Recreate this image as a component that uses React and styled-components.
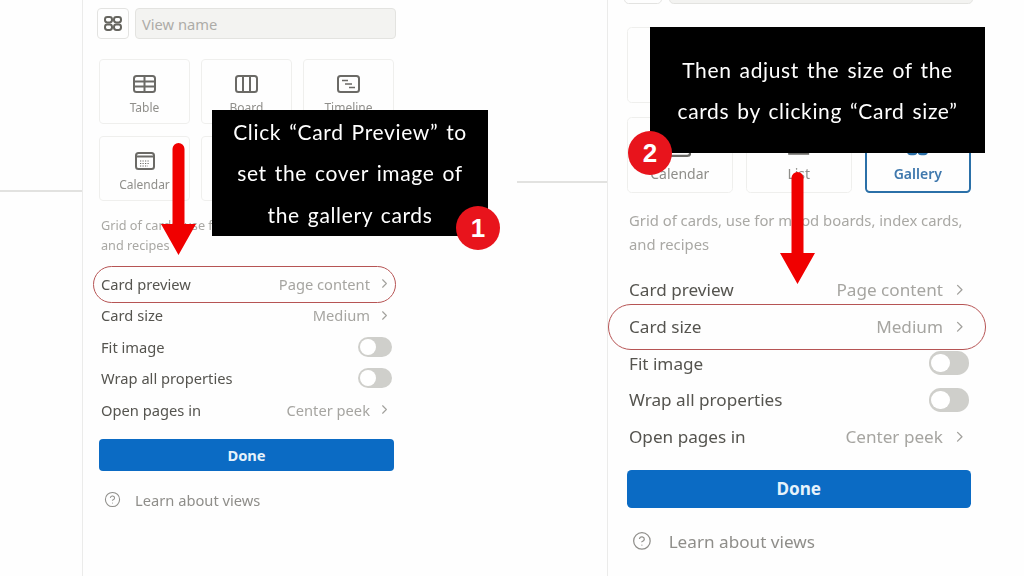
import * as React from "react";
import styled, { createGlobalStyle } from "styled-components";
import { ChevronRight, CircleHelp } from "lucide-react";

const Global = createGlobalStyle`
  html, body {
    margin: 0;
    background: #fefefe;
    overflow: hidden;
  }
`;

const Page = styled.div`
  position: relative;
  display: flex;
  width: 1024px;
  height: 576px;
  overflow: hidden;
  background: #fefefe;
  font-family: "Noto Sans", "Open Sans", sans-serif;
`;

const Gutter = styled.div`
  flex: none;
  width: ${(p) => p.$width}px;
  height: ${(p) => p.$line}px;
  border-bottom: 2px solid #e2e2e0;
`;

const Panel = styled.div`
  flex: none;
  box-sizing: border-box;
  width: ${(p) => p.$width}px;
  height: 700px;
  margin-top: ${(p) => p.$top}px;
  padding: 8px 0 0 14px;
  border-left: 1px solid #ebebea;
  zoom: ${(p) => p.$zoom};
  filter: blur(0.4px);
`;

const Content = styled.div`
  width: 299px;
`;

const NameRow = styled.div`
  display: flex;
  gap: 6px;
`;

const IconButton = styled.div`
  flex: none;
  display: flex;
  align-items: center;
  justify-content: center;
  width: 32px;
  height: 31px;
  box-sizing: border-box;
  border: 1px solid #e3e3e1;
  border-radius: 4px;
  color: #66655f;
`;

const NameInput = styled.div`
  flex: 1;
  display: flex;
  align-items: center;
  box-sizing: border-box;
  height: 31px;
  padding-left: 6px;
  background: #f3f3f1;
  border: 1px solid #e3e3e0;
  border-radius: 4px;
  color: #adaca8;
  font-size: 14.7px;
`;

const TileGrid = styled.div`
  display: grid;
  grid-template-columns: repeat(3, 91px);
  grid-auto-rows: 65px;
  gap: 12px 11px;
  margin: 20px 2px 0;
`;

const Tile = styled.div`
  display: flex;
  flex-direction: column;
  align-items: center;
  gap: 7px;
  box-sizing: border-box;
  padding-top: ${(p) => (p.$active ? 14 : 15)}px;
  border: ${(p) => (p.$active ? "2px solid #2b70a8" : "1px solid #efefed")};
  border-radius: 4px;
  color: ${(p) => (p.$active ? "#3f78ad" : "#8f8e8a")};
  font-size: 12px;
  line-height: 16px;
  font-weight: ${(p) => (p.$active ? 600 : 400)};

  svg {
    flex: none;
    height: 18px;
    color: ${(p) => (p.$active ? "#2b70a8" : "#6b6a66")};
  }
`;

const Description = styled.p`
  margin: 14px 2px 13px 4px;
  color: #a9a8a4;
  font-size: 12.7px;
  line-height: 20px;
`;

const Row = styled.div`
  display: flex;
  align-items: center;
  justify-content: space-between;
  height: 31.5px;
  margin: 0 4px;
  color: #55544f;
  font-size: 14.7px;
`;

const RowValue = styled.span`
  display: flex;
  align-items: center;
  gap: 7px;
  color: #a6a5a1;

  svg {
    color: #a2a19d;
  }
`;

const Toggle = styled.span`
  display: flex;
  align-items: center;
  box-sizing: border-box;
  width: 34px;
  height: 20px;
  padding: 2px;
  background: #cfcfcb;
  border-radius: 10px;

  &::before {
    content: "";
    width: 16px;
    height: 16px;
    background: #fff;
    border-radius: 50%;
  }
`;

const DoneButton = styled.div`
  display: flex;
  align-items: center;
  justify-content: center;
  height: 32px;
  margin: 13px 2px 0;
  background: #0b6bc4;
  border-radius: 4px;
  color: #e6f2fb;
  font-size: 14.7px;
  font-weight: 700;
`;

const Learn = styled.div`
  display: flex;
  align-items: center;
  gap: 14px;
  height: 20px;
  margin: 19px 0 0 7px;
  color: #8f8e8a;
  font-size: 14.7px;

  svg {
    flex: none;
    color: #8f8e8a;
  }
`;

const Callout = styled.div`
  position: absolute;
  left: ${(p) => p.$left}px;
  top: ${(p) => p.$top}px;
  display: flex;
  flex-direction: column;
  align-items: center;
  justify-content: center;
  width: ${(p) => p.$width}px;
  height: 126px;
  background: #000;
  color: #fff;
  font-family: Lato, sans-serif;
  font-size: 21px;
  letter-spacing: 0.65px;
  word-spacing: 2px;
  line-height: 41.5px;
  white-space: nowrap;
  filter: blur(0.3px);
`;

const Badge = styled.div`
  position: absolute;
  left: ${(p) => p.$x - 22}px;
  top: ${(p) => p.$y - 22}px;
  display: flex;
  align-items: center;
  justify-content: center;
  width: 44px;
  height: 44px;
  background: #e8141c;
  border-radius: 50%;
  color: #fff;
  font-family: "Liberation Sans", sans-serif;
  font-size: 26px;
  font-weight: 700;
`;

const Oval = styled.div`
  position: absolute;
  left: ${(p) => p.$left}px;
  top: ${(p) => p.$top}px;
  box-sizing: border-box;
  width: ${(p) => p.$width}px;
  height: ${(p) => p.$height}px;
  border: 1px solid #b65454;
  border-radius: 999px;
`;

const ArrowMark = styled.svg`
  position: absolute;
  left: ${(p) => p.$left}px;
  top: ${(p) => p.$top}px;
`;

function Arrow({ left, top, height }) {
  return (
    <ArrowMark $left={left} $top={top} width="37" height={height} viewBox={`0 0 37 ${height}`}>
      <path
        d={`M12.5 6a6 6 0 0 1 12 0V${height - 31}H36L18.5 ${height}L1 ${height - 31}H12.5Z`}
        fill="#f00000"
      />
    </ArrowMark>
  );
}

const line = { fill: "none", stroke: "currentColor", strokeWidth: 2 };

function TableIcon() {
  return (
    <svg width="23" height="18" viewBox="0 0 23 18">
      <rect x="1" y="1" width="21" height="16" rx="2.5" {...line} />
      <path d="M1 6.5H22M1 11.5H22M11.5 1V17" {...line} />
    </svg>
  );
}

function BoardIcon() {
  return (
    <svg width="23" height="18" viewBox="0 0 23 18">
      <rect x="1" y="1" width="21" height="16" rx="2.5" {...line} />
      <path d="M8 1V17M15 1V17" {...line} />
    </svg>
  );
}

function TimelineIcon() {
  return (
    <svg width="23" height="18" viewBox="0 0 23 18">
      <rect x="1" y="1" width="21" height="16" rx="2.5" {...line} />
      <path d="M5 5.5H11M8 9H15M12 12.5H18" {...line} strokeWidth="1.5" />
    </svg>
  );
}

function CalendarIcon() {
  return (
    <svg width="20" height="18" viewBox="0 0 20 18">
      <rect x="1" y="1" width="18" height="16" rx="2.5" {...line} />
      <path d="M1 3.5H19V5.5H1Z" fill="currentColor" />
      <path d="M5 9H15M5 11.5H15M5 14H13" {...line} strokeWidth="1.2" strokeDasharray="1.2 1.3" />
    </svg>
  );
}

function ListIcon() {
  return (
    <svg width="20" height="18" viewBox="0 0 20 18">
      <path d="M1 3H19M1 9H19M1 15H19" {...line} />
    </svg>
  );
}

function GalleryIcon() {
  return (
    <svg width="18" height="15" viewBox="0 0 18 15">
      <rect x="1" y="1" width="7" height="5.5" rx="2.4" {...line} />
      <rect x="10" y="1" width="7" height="5.5" rx="2.4" {...line} />
      <rect x="1" y="8.5" width="7" height="5.5" rx="2.4" {...line} />
      <rect x="10" y="8.5" width="7" height="5.5" rx="2.4" {...line} />
    </svg>
  );
}

const tiles = [
  { name: "Table", icon: <TableIcon /> },
  { name: "Board", icon: <BoardIcon /> },
  { name: "Timeline", icon: <TimelineIcon /> },
  { name: "Calendar", icon: <CalendarIcon /> },
  { name: "List", icon: <ListIcon /> },
  { name: "Gallery", icon: <GalleryIcon />, active: true },
];

const settings = [
  { name: "Card preview", value: "Page content" },
  { name: "Card size", value: "Medium" },
  { name: "Fit image", toggle: true },
  { name: "Wrap all properties", toggle: true },
  { name: "Open pages in", value: "Center peek" },
];

function ViewSettings({ width, top, zoom }) {
  return (
    <Panel $width={width} $top={top} $zoom={zoom}>
      <Content>
        <NameRow>
          <IconButton>
            <GalleryIcon />
          </IconButton>
          <NameInput>View name</NameInput>
        </NameRow>
        <TileGrid>
          {tiles.map((t) => (
            <Tile key={t.name} $active={t.active}>
              {t.icon}
              {t.name}
            </Tile>
          ))}
        </TileGrid>
        <Description>
          Grid of cards, use for mood boards, index cards,
          <br />
          and recipes
        </Description>
        {settings.map((s) => (
          <Row key={s.name}>
            {s.name}
            {s.toggle ? (
              <Toggle />
            ) : (
              <RowValue>
                {s.value}
                <ChevronRight size={15} strokeWidth={1.8} />
              </RowValue>
            )}
          </Row>
        ))}
        <DoneButton>Done</DoneButton>
        <Learn>
          <CircleHelp size={17} strokeWidth={1.5} />
          Learn about views
        </Learn>
      </Content>
    </Panel>
  );
}

export default function App() {
  return (
    <Page>
      <Global />
      <Gutter $width={82} $line={190} />
      <ViewSettings width={435} top={0} zoom={1} />
      <Gutter $width={90} $line={181} />
      <ViewSettings width={357} top={-35.5} zoom={1.167} />

      <Arrow left={160} top={143} height={112} />
      <Arrow left={779} top={172} height={112} />
      <Oval $left={93} $top={266} $width={303} $height={37} />
      <Oval $left={608} $top={304} $width={378} $height={46} />

      <Callout $left={212} $top={110} $width={276}>
        <span>Click “Card Preview” to</span>
        <span>set the cover image of</span>
        <span>the gallery cards</span>
      </Callout>
      <Callout $left={650} $top={27} $width={335}>
        <span>Then adjust the size of the</span>
        <span>cards by clicking “Card size”</span>
      </Callout>
      <Badge $x={478} $y={228}>1</Badge>
      <Badge $x={650} $y={153}>2</Badge>
    </Page>
  );
}
